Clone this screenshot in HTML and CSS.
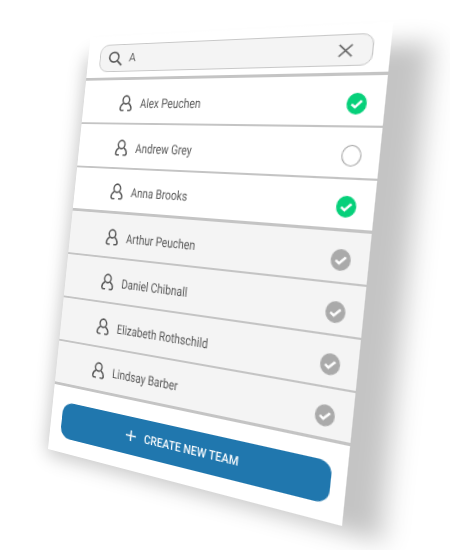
FILE: index.html
```html
<!DOCTYPE html>
<html>
<head>
    <title>Team</title>
    <link rel="stylesheet" href="styles.css">
</head>
<body>
    <svg class="defs" width="0" height="0">
        <symbol id="person" viewBox="0 0 16 20">
            <ellipse cx="8" cy="6" rx="4.3" ry="5" fill="none" stroke="currentColor" stroke-width="1.8"/>
            <path d="M4.8 10.2 C2.4 11.8 1 14 1 16.6 C1 18.2 2 18.9 3.4 18.9 L5.6 18.9 M10.4 18.9 L12.6 18.9 C14 18.9 15 18.2 15 16.6 C15 14 13.6 11.8 11.2 10.2" fill="none" stroke="currentColor" stroke-width="1.8"/>
        </symbol>
        <symbol id="check" viewBox="0 0 20 20">
            <path d="M5 10.6 L8.6 13.8 L15 6.8" fill="none" stroke="#fff" stroke-width="2.6"/>
        </symbol>
    </svg>

    <div class="card">
        <div class="search-wrap">
            <div class="search">
                <svg class="search-icon" viewBox="0 0 16 16">
                    <circle cx="6.5" cy="6.5" r="5" fill="none" stroke="#555" stroke-width="1.6"/>
                    <path d="M10.2 10.2 L15 15" stroke="#555" stroke-width="1.8"/>
                </svg>
                <span class="search-text">A</span>
                <svg class="close-icon" viewBox="0 0 14 14">
                    <path d="M1 1 L13 13 M13 1 L1 13" stroke="#666" stroke-width="1.6"/>
                </svg>
            </div>
        </div>

        <div class="row">
            <svg class="person"><use href="#person"/></svg>
            <span class="name"><span>Alex Peuchen</span></span>
            <span class="mark mark-on"><svg><use href="#check"/></svg></span>
        </div>
        <div class="row">
            <svg class="person"><use href="#person"/></svg>
            <span class="name"><span>Andrew Grey</span></span>
            <span class="mark mark-off"></span>
        </div>
        <div class="row row-thick">
            <svg class="person"><use href="#person"/></svg>
            <span class="name"><span>Anna Brooks</span></span>
            <span class="mark mark-on"><svg><use href="#check"/></svg></span>
        </div>
        <div class="row row-locked">
            <svg class="person"><use href="#person"/></svg>
            <span class="name"><span>Arthur Peuchen</span></span>
            <span class="mark mark-locked"><svg><use href="#check"/></svg></span>
        </div>
        <div class="row row-locked">
            <svg class="person"><use href="#person"/></svg>
            <span class="name"><span>Daniel Chibnall</span></span>
            <span class="mark mark-locked"><svg><use href="#check"/></svg></span>
        </div>
        <div class="row row-locked">
            <svg class="person"><use href="#person"/></svg>
            <span class="name"><span>Elizabeth Rothschild</span></span>
            <span class="mark mark-locked"><svg><use href="#check"/></svg></span>
        </div>
        <div class="row row-locked row-thick">
            <svg class="person"><use href="#person"/></svg>
            <span class="name"><span>Lindsay Barber</span></span>
            <span class="mark mark-locked"><svg><use href="#check"/></svg></span>
        </div>

        <div class="footer">
            <button class="create">
                <svg class="plus" viewBox="0 0 14 14">
                    <path d="M7 1 V13 M1 7 H13" stroke="#fff" stroke-width="1.6"/>
                </svg>
                <span class="create-label">CREATE NEW TEAM</span>
            </button>
        </div>
    </div>
</body>
</html>
```

FILE: styles.css
```css
body {
    margin: 0;
    padding: 0;
    height: 550px;
    background-color: #fff;
    font-family: Roboto, "Liberation Sans", sans-serif;
}

.defs {
    display: block;
}

/* the whole card is tilted, corners measured off the picture */
.card {
    box-sizing: border-box;
    position: relative;
    width: 300px;
    height: 456px;
    background-color: #fff;
    transform-origin: 0 0;
    transform: matrix3d(0.76933, -0.06510, 0, -0.00061087,
                        -0.09339, 0.90067, 0, -0.000003877,
                        0, 0, 1, 0,
                        90.5, 37.5, 0, 1);
}

/* shadow sits behind the card and starts below its top edge */
.card::before {
    content: "";
    position: absolute;
    top: 49px;
    left: 0;
    right: 0;
    bottom: 0;
    z-index: -1;
    box-shadow: 15px -12px 20px 17px rgba(0, 0, 0, 0.23);
}

.search-wrap {
    box-sizing: border-box;
    height: 48px;
    padding: 9px 14px 0;
    border-bottom: 3px solid #c4c4c4;
    background-color: #fff;
}

.search {
    box-sizing: border-box;
    display: flex;
    align-items: center;
    height: 30px;
    padding: 0 16px 0 9px;
    background-color: #f4f4f4;
    border: 1px solid #c8c8c8;
    border-radius: 10px;
}

.search-icon {
    width: 17px;
    height: 17px;
}

.search-text {
    flex: 1;
    margin-left: 7px;
    font-size: 12px;
    color: #666;
}

.close-icon {
    width: 13px;
    height: 13px;
}

.row {
    box-sizing: border-box;
    display: flex;
    align-items: center;
    height: 48px;
    padding: 3px 15px 0 43px;
    border-bottom: 2px solid #c4c4c4;
    background-color: #fff;
    color: #555;
}

.row-locked {
    background-color: #f4f4f4;
}

.row-thick {
    border-bottom-width: 3px;
}

.person {
    width: 14px;
    height: 18px;
}

.name {
    flex: 1;
    margin-left: 9px;
    font-size: 13.5px;
}

/* the names are narrower than plain Roboto */
.name span {
    display: inline-block;
    white-space: nowrap;
    transform-origin: 0 50%;
    transform: scaleX(0.8);
}

.mark {
    box-sizing: border-box;
    display: block;
    width: 17px;
    height: 20px;
    margin-top: 2px;
    border-radius: 50%;
}

.mark svg {
    display: block;
    width: 100%;
    height: 100%;
}

.mark-on {
    background-color: #06d07a;
}

.mark-off {
    background-color: #fff;
    border: 1px solid #aaa;
}

.mark-locked {
    background-color: #aaa;
}

.footer {
    box-sizing: border-box;
    height: 72px;
    padding: 17px 13px 0;
    background-color: #fff;
}

.create {
    display: flex;
    align-items: center;
    justify-content: center;
    gap: 8px;
    width: 100%;
    height: 39px;
    padding: 0 7px 0 0;
    background-color: #2077ae;
    color: #fff;
    border: none;
    border-radius: 12px;
    font-family: Roboto, "Liberation Sans", sans-serif;
    font-size: 12.5px;
    font-weight: 500;
}

.create-label {
    display: inline-block;
    margin-right: -15px;
    transform-origin: 0 50%;
    transform: scaleX(0.86);
}

.plus {
    width: 13px;
    height: 13px;
}
```
